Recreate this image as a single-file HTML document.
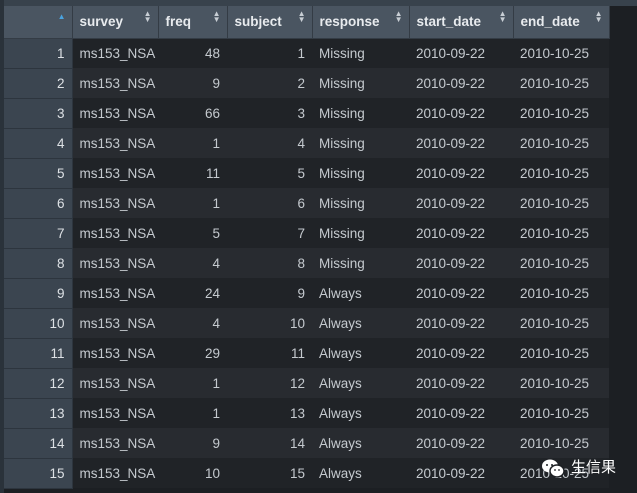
<!DOCTYPE html>
<html><head><meta charset="utf-8"><style>
body{margin:0;width:637px;height:493px;background:#1c1f23;overflow:hidden;font-family:"Liberation Sans","Noto Sans CJK SC",sans-serif;font-size:13.5px;position:relative}
.top{position:absolute;left:0;top:0;width:637px;height:6px;background:#38424c}
.lstrip{position:absolute;left:0;top:0;width:4px;height:493px;background:#2a323a}
table{position:absolute;left:4px;top:6px;border-collapse:collapse;table-layout:fixed;width:605px}
td,th{height:30px;padding:0 7px;white-space:nowrap;color:#c5cacf;box-sizing:border-box;overflow:hidden}
th{background:#4a5561;color:#e8ebee;font-weight:bold;text-align:left;border-right:1px solid #343c45;border-bottom:1px solid #343c45;position:relative;height:32px}
th .s{position:absolute;right:6px;top:5px;font-size:8px;line-height:6px;color:#c8ced4;font-weight:normal}
td.n{background:#3b4550;text-align:right;border-bottom:1px solid #2d353e;border-right:1px solid #2d353e;color:#dde1e5}
tr:nth-child(odd) td{background:#202327}
tr:nth-child(even) td{background:#282b30}
tr td.n{background:#3b4550!important}
.r{text-align:right}
.wm{position:absolute;left:540px;top:456px;color:#fff;font-size:15px;font-family:"Noto Sans CJK SC",sans-serif}
</style></head><body>
<div class="top"></div><div class="lstrip"></div>
<table>
<colgroup><col style="width:68px"><col style="width:86px"><col style="width:69px"><col style="width:85px"><col style="width:97px"><col style="width:104px"><col style="width:96px"></colgroup>
<thead><tr><th><span class="s" style="color:#4aa3df;top:8px">▲</span></th><th>survey<span class="s">▲<br>▼</span></th><th>freq<span class="s">▲<br>▼</span></th><th>subject<span class="s">▲<br>▼</span></th><th>response<span class="s">▲<br>▼</span></th><th>start_date<span class="s">▲<br>▼</span></th><th>end_date<span class="s">▲<br>▼</span></th></tr></thead>
<tbody>
<tr><td class="n">1</td><td>ms153_NSA</td><td class="r">48</td><td class="r">1</td><td>Missing</td><td>2010-09-22</td><td>2010-10-25</td></tr>
<tr><td class="n">2</td><td>ms153_NSA</td><td class="r">9</td><td class="r">2</td><td>Missing</td><td>2010-09-22</td><td>2010-10-25</td></tr>
<tr><td class="n">3</td><td>ms153_NSA</td><td class="r">66</td><td class="r">3</td><td>Missing</td><td>2010-09-22</td><td>2010-10-25</td></tr>
<tr><td class="n">4</td><td>ms153_NSA</td><td class="r">1</td><td class="r">4</td><td>Missing</td><td>2010-09-22</td><td>2010-10-25</td></tr>
<tr><td class="n">5</td><td>ms153_NSA</td><td class="r">11</td><td class="r">5</td><td>Missing</td><td>2010-09-22</td><td>2010-10-25</td></tr>
<tr><td class="n">6</td><td>ms153_NSA</td><td class="r">1</td><td class="r">6</td><td>Missing</td><td>2010-09-22</td><td>2010-10-25</td></tr>
<tr><td class="n">7</td><td>ms153_NSA</td><td class="r">5</td><td class="r">7</td><td>Missing</td><td>2010-09-22</td><td>2010-10-25</td></tr>
<tr><td class="n">8</td><td>ms153_NSA</td><td class="r">4</td><td class="r">8</td><td>Missing</td><td>2010-09-22</td><td>2010-10-25</td></tr>
<tr><td class="n">9</td><td>ms153_NSA</td><td class="r">24</td><td class="r">9</td><td>Always</td><td>2010-09-22</td><td>2010-10-25</td></tr>
<tr><td class="n">10</td><td>ms153_NSA</td><td class="r">4</td><td class="r">10</td><td>Always</td><td>2010-09-22</td><td>2010-10-25</td></tr>
<tr><td class="n">11</td><td>ms153_NSA</td><td class="r">29</td><td class="r">11</td><td>Always</td><td>2010-09-22</td><td>2010-10-25</td></tr>
<tr><td class="n">12</td><td>ms153_NSA</td><td class="r">1</td><td class="r">12</td><td>Always</td><td>2010-09-22</td><td>2010-10-25</td></tr>
<tr><td class="n">13</td><td>ms153_NSA</td><td class="r">1</td><td class="r">13</td><td>Always</td><td>2010-09-22</td><td>2010-10-25</td></tr>
<tr><td class="n">14</td><td>ms153_NSA</td><td class="r">9</td><td class="r">14</td><td>Always</td><td>2010-09-22</td><td>2010-10-25</td></tr>
<tr><td class="n">15</td><td>ms153_NSA</td><td class="r">10</td><td class="r">15</td><td>Always</td><td>2010-09-22</td><td>2010-10-25</td></tr>
</tbody></table>
<svg style="position:absolute;left:541px;top:458px" width="26" height="22" viewBox="0 0 26 22"><ellipse cx="9" cy="8" rx="8" ry="6.5" fill="#fff"/><ellipse cx="16" cy="13" rx="7" ry="6" fill="#fff" stroke="#1c1f23" stroke-width="1.5"/><circle cx="6" cy="7" r="1" fill="#1c1f23"/><circle cx="11" cy="7" r="1" fill="#1c1f23"/><circle cx="14" cy="12" r="0.9" fill="#1c1f23"/><circle cx="18" cy="12" r="0.9" fill="#1c1f23"/></svg>
<div class="wm" style="left:571px">生信果</div>
</body></html>
